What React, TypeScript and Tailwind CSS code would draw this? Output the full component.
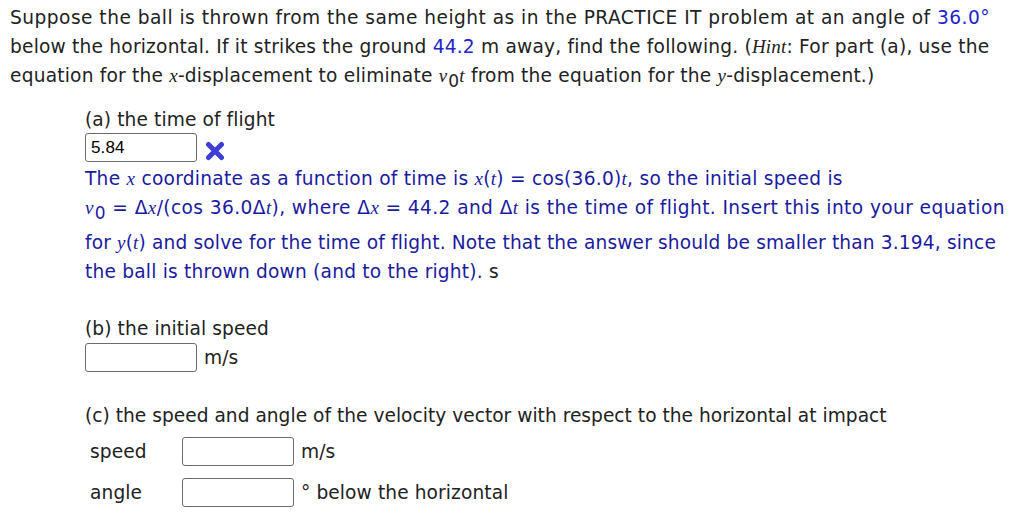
import React from "react";

const M = ({ children }: { children: React.ReactNode }) => (
  <span className="[font-family:'Liberation_Serif',serif] italic text-[19px]">{children}</span>
);

const Sub0 = () => (
  <span className="inline-block translate-y-[5px] text-[17px] ml-[1px]">0</span>
);

const Box = ({ value }: { value?: string }) => (
  <div className="w-[112px] h-[29px] border border-[#6b6b6b] rounded-[3px] bg-white flex items-center px-[5px] [font-family:'Liberation_Sans',Arial,sans-serif] text-[17px] text-black">
    {value}
  </div>
);

export default function App() {
  return (
    <div className="w-[1024px] h-[524px] bg-white text-[#222] [font-family:'DejaVu_Sans',Verdana,sans-serif] text-[18.6px] tracking-[0.1px] overflow-hidden whitespace-nowrap">
      <div className="pl-[10px] pr-[10px] pt-[3px] leading-[29px]">
        <div className="tracking-[0.47px]">
          Suppose the ball is thrown from the same height as in the PRACTICE IT problem at an angle of{" "}
          <span className="text-[#2323c8]">36.0°</span>
        </div>
        <div className="tracking-[0.2px]">
          below the horizontal. If it strikes the ground <span className="text-[#2323c8]">44.2</span> m away, find the
          following. (<M>Hint</M>: For part (a), use the
        </div>
        <div className="tracking-[0.2px]">
          equation for the <M>x</M>-displacement to eliminate <M>v</M>
          <Sub0 />
          <M>t</M> from the equation for the <M>y</M>-displacement.)
        </div>
      </div>

      <div className="pl-[85px] pr-[10px] mt-[14px]">
        <div className="leading-[29px]">(a) the time of flight</div>
        <div className="flex items-center gap-[8px] mt-[-1px]">
          <Box value="5.84" />
          <svg width="20" height="20" viewBox="0 0 20 20" className="mt-[6px]">
            <path d="M3.5 3.5 L16.5 16.5 M16.5 3.5 L3.5 16.5" stroke="#3d3dd8" strokeWidth="5" strokeLinecap="round" />
          </svg>
        </div>
        <div className="text-[#1b1ba0] leading-[29px] mt-[2px]">
          <div className="tracking-[0.26px]">
            The <M>x</M> coordinate as a function of time is <M>x</M>(<M>t</M>) = cos(36.0)<M>t</M>, so the initial speed is
          </div>
          <div className="mb-[5px] tracking-[0.4px]">
            <M>v</M>
            <Sub0 /> = Δ<M>x</M>/(cos 36.0Δ<M>t</M>), where Δ<M>x</M> = 44.2 and Δ<M>t</M> is the time of flight. Insert this into your equation
          </div>
          <div className="tracking-[0.15px]">
            for <M>y</M>(<M>t</M>) and solve for the time of flight. Note that the answer should be smaller than 3.194, since
          </div>
          <div className="tracking-[0.2px]">
            the ball is thrown down (and to the right). <span className="text-[#222]">s</span>
          </div>
        </div>

        <div className="mt-[28px] leading-[29px]">(b) the initial speed</div>
        <div className="flex items-center gap-[7px]">
          <Box />
          <span>m/s</span>
        </div>

        <div className="mt-[29px] leading-[29px] tracking-[0.02px]">
          (c) the speed and angle of the velocity vector with respect to the horizontal at impact
        </div>
        <div className="flex items-center mt-[7px]">
          <span className="w-[97px] pl-[5px]">speed</span>
          <Box />
          <span className="ml-[7px]">m/s</span>
        </div>
        <div className="flex items-center mt-[12px]">
          <span className="w-[97px] pl-[5px]">angle</span>
          <Box />
          <span className="ml-[7px]">° below the horizontal</span>
        </div>
      </div>
    </div>
  );
}
